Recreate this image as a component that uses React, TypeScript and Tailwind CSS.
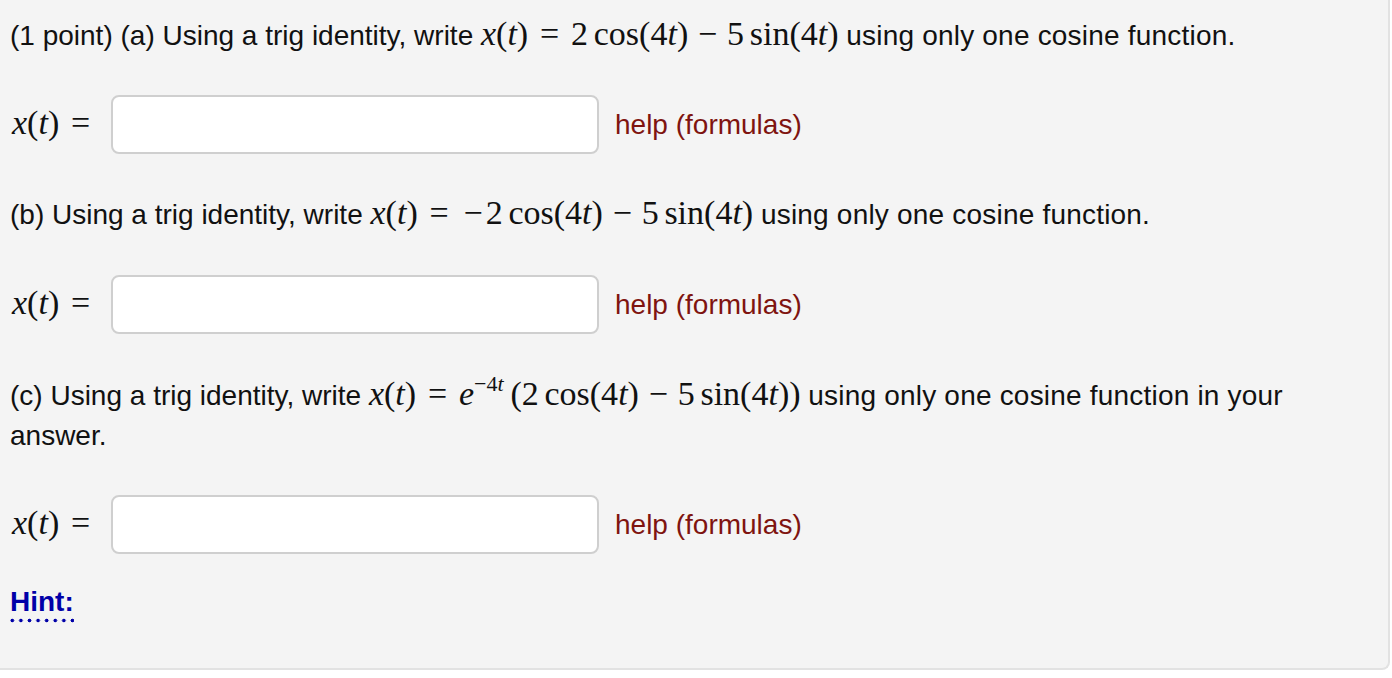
import React from "react";

const I = ({ children }: { children: React.ReactNode }) => (
  <span className="italic">{children}</span>
);

const M = ({ children }: { children: React.ReactNode }) => (
  <span className="text-[34px] leading-none text-[#111] whitespace-nowrap" style={{ fontFamily: '"Liberation Serif", "Times New Roman", serif' }}>
    {children}
  </span>
);

const Eq = () => <span className="inline-block w-[0.74em] text-center mx-[0.26em]">=</span>;
const Minus = () => <span className="inline-block w-[0.74em] text-center mx-[0.2em]">−</span>;
const UMinus = () => <span className="inline-block w-[0.74em] text-center">−</span>;
const Th = () => <span className="inline-block w-[0.17em]" />;

const XT = () => (
  <>
    <I>x</I>(<I>t</I>)
  </>
);

const Row = () => (
  <div className="flex items-center h-[59px]">
    <div className="w-[101px] pl-[2px]">
      <M>
        <XT />
        <span className="inline-block w-[0.74em] text-center ml-[0.26em]">=</span>
      </M>
    </div>
    <div className="w-[488px] h-[59px] bg-white border-2 border-[#cfcfcf] rounded-[8px]" />
    <a className="ml-[16px] text-[#7f1410] text-[28px]">help (formulas)</a>
  </div>
);

export default function App() {
  return (
    <div className="bg-white w-[1392px] h-[678px]" style={{ fontFamily: '"Liberation Sans", Arial, sans-serif' }}>
      <div className="w-[1390px] h-[670px] bg-[#f4f4f4] border-r-2 border-b-2 border-[#e2e2e2] rounded-br-[8px] px-[10px] pt-[16px] text-[28px] text-[#111]">
        <p className="leading-[40px]">
          (1 point) (a) Using a trig identity, write{" "}
          <M>
            <XT />
            <Eq />2<Th />cos(4<I>t</I>)<Minus />5<Th />sin(4<I>t</I>)
          </M>{" "}
          <span className="tracking-[0.2px]">using only one cosine function.</span>
        </p>
        <div className="mt-[39px]">
          <Row />
        </div>
        <p className="leading-[40px] mt-[41px]">
          (b) Using a trig identity, write{" "}
          <M>
            <XT />
            <Eq />
            <UMinus />2<Th />cos(4<I>t</I>)<Minus />5<Th />sin(4<I>t</I>)
          </M>{" "}
          <span className="tracking-[0.2px]">using only one cosine function.</span>
        </p>
        <div className="mt-[40px]">
          <Row />
        </div>
        <p className="leading-[40px] mt-[42px]">
          (c) Using a trig identity, write{" "}
          <M>
            <XT />
            <Eq />
            <I>e</I>
            <span className="text-[22px] leading-none relative top-[-14px]">
              −4<I>t</I>
            </span>
            <span className="inline-block w-[0.2em]" />
            (2<Th />cos(4<I>t</I>)<Minus />5<Th />sin(4<I>t</I>))
          </M>{" "}
          <span className="tracking-[0.2px]">using only one cosine function in your</span>
          <br />
          answer.
        </p>
        <div className="mt-[39px]">
          <Row />
        </div>
        <div className="mt-[33px] leading-[30px]">
          <span className="inline-block font-bold text-[#0000a8] leading-[30px] pb-[6px] bg-[radial-gradient(circle,#0000a8_1.7px,transparent_2.1px)] bg-[length:8.6px_5px] bg-repeat-x bg-[position:-2px_100%]">
            Hint:
          </span>
        </div>
      </div>
    </div>
  );
}
